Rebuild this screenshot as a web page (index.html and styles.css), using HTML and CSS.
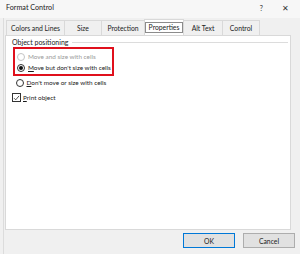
FILE: index.html
```html
<!DOCTYPE html>
<html>
<head>
<meta charset="utf-8">
<link rel="stylesheet" href="styles.css">
</head>
<body>
<div class="dialog">
  <div class="titlebar">
    <span class="title">Format Control</span>
    <span class="tb-btns"><span class="help">?</span><span class="close">✕</span></span>
  </div>
  <div class="body">
    <div class="tabs">
      <div class="tab w1">Colors and Lines</div>
      <div class="tab w2">Size</div>
      <div class="tab w3">Protection</div>
      <div class="tab sel w4"><span class="focus">Properties</span></div>
      <div class="tab w5">Alt Text</div>
      <div class="tab w6">Control</div>
    </div>
    <div class="panel">
      <div class="group"><span class="glabel">Object positioning</span><span class="gline"></span></div>
      <div class="redbox">
        <div class="opt disabled"><span class="radio"></span>Move and size with cells</div>
        <div class="opt"><span class="radio on"></span><span><u>M</u>ove but don't size with cells</span></div>
      </div>
      <div class="opt third"><span class="radio"></span><span><u>D</u>on't move or size with cells</span></div>
      <div class="opt chk"><span class="check"><svg width="8" height="8" viewBox="0 0 8 8"><path d="M1.2 4.2 L3.1 6.1 L6.9 1.6" fill="none" stroke="#222" stroke-width="0.9"/></svg></span><span><u>P</u>rint object</span></div>
    </div>
    <div class="buttons">
      <div class="btn ok">OK</div>
      <div class="btn">Cancel</div>
    </div>
  </div>
</div>
</body>
</html>
```

FILE: styles.css
```css
html, body {
  margin: 0;
  padding: 0;
}
body {
  width: 300px;
  height: 254px;
  overflow: hidden;
  background: #f0f0f0;
  font-family: "Lato", "Open Sans", sans-serif;
  font-size: 6.8px;
  color: #1a1a1a;
  white-space: nowrap;
}
.dialog {
  display: flex;
  flex-direction: column;
  height: 254px;
}
.titlebar {
  box-sizing: border-box;
  height: 18px;
  display: flex;
  align-items: flex-start;
  justify-content: space-between;
  padding: 3px 11px 0 6px;
  background: #f7f7f7;
}
.title {
  font-size: 7.2px;
  color: #222;
}
.tb-btns {
  display: flex;
  gap: 19px;
  align-items: center;
  color: #333;
}
.help { font-size: 7px; }
.close { font-size: 8px; }
.body {
  flex: 1;
  display: flex;
  flex-direction: column;
  padding: 2px 5px 0 1px;
  border-left: 1px solid #dcdcdc;
  margin-left: 3px;
}
.tabs {
  display: flex;
  height: 15px;
  margin-left: 1px;
}
.tab {
  box-sizing: border-box;
  height: 15px;
  border: 1px solid #d9d9d9;
  border-bottom: none;
  margin-right: -1px;
  display: flex;
  align-items: center;
  justify-content: center;
  background: #f0f0f0;
  color: #222;
}
.w1 { width: 59px; }
.w2 { width: 38px; }
.w3 { width: 44px; }
.w4 { width: 40px; }
.w5 { width: 40px; }
.w6 { width: 38px; }
.tab.sel {
  background: #fff;
  height: 16px;
  margin-top: -1px;
  position: relative;
  z-index: 1;
}
.focus {
  border: 1px solid #8c8c8c;
  padding: 0 3px;
  line-height: 9px;
}
.panel {
  box-sizing: border-box;
  height: 195px;
  background: #fff;
  border: 1px solid #d9d9d9;
  width: 286px;
  padding: 1px 0 0 6px;
  display: flex;
  flex-direction: column;
}
.group {
  display: flex;
  align-items: center;
  gap: 3px;
  height: 10px;
  font-size: 7px;
}
.gline {
  flex: 1;
  height: 1px;
  background: #dcdcdc;
  margin-right: 2px;
}
.redbox {
  margin-top: 0;
  margin-left: 1px;
  width: 101px;
  box-sizing: border-box;
  border: 2.5px solid #e0101c;
  padding: 2px 0 1px 2px;
}
.opt {
  display: flex;
  align-items: center;
  gap: 3px;
  height: 11px;
  font-size: 6.4px;
}
.opt.disabled { color: #9a9a9a; }
.radio {
  flex: none;
  box-sizing: border-box;
  width: 8px;
  height: 8px;
  border-radius: 50%;
  border: 1px solid #333;
  background: #fff;
  display: flex;
  align-items: center;
  justify-content: center;
}
.disabled .radio { border-color: #c4c4c4; }
.radio.on::after {
  content: "";
  width: 4px;
  height: 4px;
  border-radius: 50%;
  background: #111;
}
.third {
  margin-left: 3.5px;
  margin-top: 1px;
}
.chk {
  margin-top: 4px;
  gap: 2px;
}
.check {
  flex: none;
  box-sizing: border-box;
  width: 9px;
  height: 9px;
  border: 1px solid #333;
  background: #fff;
  display: flex;
  align-items: center;
  justify-content: center;
}
.check svg { display: block; }
.buttons {
  display: flex;
  justify-content: flex-end;
  gap: 8px;
  margin-top: 3px;
}
.btn {
  box-sizing: border-box;
  width: 52px;
  height: 15px;
  border: 1px solid #adadad;
  background: #e1e1e1;
  display: flex;
  align-items: center;
  justify-content: center;
  color: #222;
}
.btn.ok {
  border: 1.5px solid #0078d7;
}
```
